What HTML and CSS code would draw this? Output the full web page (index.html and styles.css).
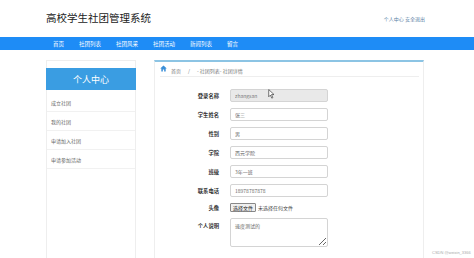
FILE: index.html
```html
<!DOCTYPE html>
<html lang="zh-CN">
<head>
    <meta charset="UTF-8">
    <meta name="viewport" content="width=device-width, initial-scale=1.0">
    <title>高校学生社团管理系统</title>
    <link rel="stylesheet" href="styles.css">
</head>
<body>

    <div class="top">
        <div class="wrap top-inner">
            <h1 class="logo">高校学生社团管理系统</h1>
            <div class="user-links"><a href="#">个人中心</a> <a href="#">安全退出</a></div>
        </div>
    </div>

    <div class="nav">
        <div class="wrap nav-inner">
            <a href="#">首页</a>
            <a href="#">社团列表</a>
            <a href="#">社团风采</a>
            <a href="#">社团活动</a>
            <a href="#">新闻列表</a>
            <a href="#">留言</a>
        </div>
    </div>

    <div class="wrap main">
        <div class="side">
            <div class="side-title">个人中心</div>
            <a class="side-item" href="#">成立社团</a>
            <a class="side-item" href="#">我的社团</a>
            <a class="side-item" href="#">申请加入社团</a>
            <a class="side-item" href="#">申请参加活动</a>
        </div>

        <div class="content">
            <div class="crumb">
                <svg class="home" viewBox="0 0 16 16" width="7" height="7">
                    <path d="M8 1 L0.5 8 H3 V15 H6.5 V10.5 H9.5 V15 H13 V8 H15.5 Z" fill="#3a8fd8"/>
                </svg>
                <span>首页</span>
                <span class="slash">/</span>
                <span>- 社团列表- 社团详情</span>
            </div>

            <form class="form">
                <label>登录名称</label>
                <input class="field" type="text" value="zhangsan" disabled>

                <label>学生姓名</label>
                <input class="field" type="text" value="张三">

                <label>性别</label>
                <input class="field" type="text" value="男">

                <label>学院</label>
                <input class="field" type="text" value="西元学院">

                <label>班级</label>
                <input class="field" type="text" value="3年一班">

                <label>联系电话</label>
                <input class="field" type="text" value="18978787878">

                <label>头像</label>
                <div class="file">
                    <span class="file-btn">选择文件</span>
                    <span class="file-name">未选择任何文件</span>
                </div>

                <label>个人说明</label>
                <textarea class="field note">速度测试的</textarea>
            </form>
        </div>
    </div>

    <svg class="cursor" viewBox="0 0 12 18" width="7" height="10">
        <path d="M1 1 L1 14 L4 11 L6.5 16.5 L8.5 15.5 L6 10 L10.5 10 Z" fill="#fff" stroke="#333" stroke-width="1.2"/>
    </svg>

    <div class="mark">CSDN @weixin_3366</div>

</body>
</html>
```

FILE: styles.css
```css
* {
  margin: 0;
  padding: 0;
  box-sizing: border-box;
}
body {
    font-family: "Noto Sans CJK SC", "Noto Sans", sans-serif;
    background: #fff;
    color: #333;
    height: 258px;
    overflow: hidden;
}
a {
    text-decoration: none;
}
.wrap {
    width: 378px;
    margin: 0 auto 0 46px;
}
.top-inner {
    height: 37px;
    display: flex;
    align-items: center;
    justify-content: space-between;
}
.logo {
    font-size: 10.5px;
    font-weight: normal;
    color: #222;
    margin-top: -2px;
}
.user-links {
    font-size: 5px;
    color: #5b7fa6;
    margin-right: -1px;
}
.user-links a {
    color: #5b7fa6;
}
.nav {
    background: #1e8cf6;
    height: 13px;
}
.nav-inner {
    display: flex;
    align-items: center;
    height: 13px;
    padding-left: 7px;
    gap: 15px;
}
.nav-inner a {
    color: #fff;
    font-size: 5.5px;
}
.main {
    display: flex;
    gap: 18px;
    margin-top: 10px;
}
.side {
    width: 90px;
    height: 200px;
    border: 1px solid #eee;
    border-bottom: none;
    padding-top: 7px;
    display: flex;
    flex-direction: column;
}
.side-title {
    background: #3a9de2;
    color: #fff;
    height: 22px;
    margin: 0 -1px;
    font-size: 9px;
    display: flex;
    align-items: center;
    justify-content: center;
    margin-bottom: 3px;
}
.side-item {
    height: 19px;
    border-bottom: 1px solid #f1f1f1;
    font-size: 5px;
    color: #666;
    display: flex;
    align-items: center;
    padding-left: 4px;
}
.content {
    width: 270px;
    height: 200px;
    border: 1px solid #eee;
    border-top: 2px solid #8cc4e4;
    border-bottom: none;
    padding: 0 4px 0 5px;
}
.crumb {
    height: 15px;
    border-bottom: 1px solid #eee;
    display: flex;
    align-items: center;
    gap: 3px;
    font-size: 5px;
    color: #777;
    padding-top: 2px;
}
.crumb .home {
    margin-right: 1px;
    margin-top: -3px;
}
.crumb .slash {
    margin: 0 4px;
}
.form {
    display: grid;
    grid-template-columns: 59px 98px;
    column-gap: 11px;
    row-gap: 6px;
    margin-top: 12px;
    align-items: center;
}
.form label {
    font-size: 5.3px;
    font-weight: bold;
    color: #333;
    text-align: right;
}
.field {
    height: 13px;
    border: 1px solid #d4d4d4;
    border-radius: 2px;
    font-family: inherit;
    font-size: 5px;
    color: #666;
    padding: 0 4px;
    background: #fff;
    outline: none;
}
.field:disabled {
    background: #e9e9e9;
    color: #777;
}
.file {
    display: flex;
    align-items: center;
    gap: 2px;
    height: 9px;
}
.file-btn {
    font-size: 5px;
    border: 1px solid #888;
    border-radius: 1px;
    background: #efefef;
    padding: 0 2px;
    height: 9px;
    line-height: 7px;
    color: #222;
}
.file-name {
    font-size: 5px;
    color: #444;
}
.form .note {
    height: 29px;
    padding: 3px 4px;
    resize: vertical;
    align-self: start;
}
.form label:last-of-type {
    align-self: start;
    margin-top: 4px;
}
.cursor {
    position: absolute;
    left: 268px;
    top: 89px;
}
.mark {
    position: absolute;
    left: 432px;
    top: 250px;
    font-size: 4px;
    color: #aaa;
    font-family: "Liberation Sans", sans-serif;
}
```
